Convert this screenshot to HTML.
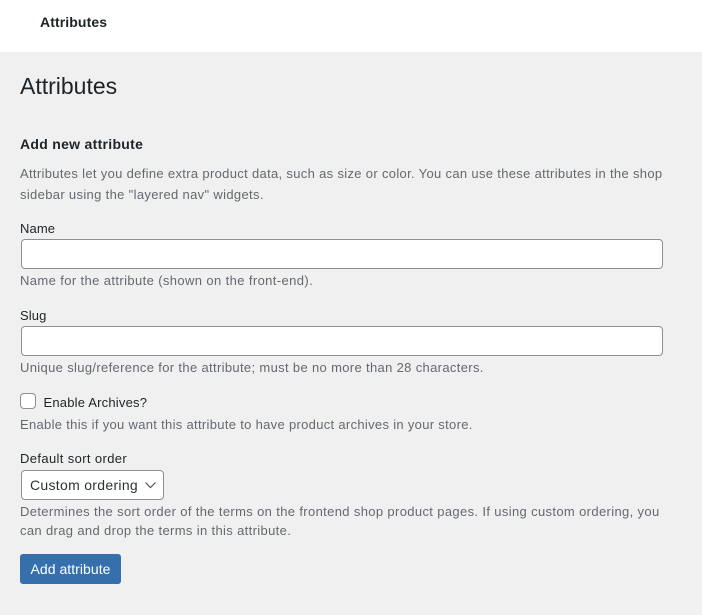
<!DOCTYPE html>
<html>
<head>
<meta charset="utf-8">
<style>
html,body{margin:0;padding:0;width:702px;height:615px;overflow:hidden;background:#f0f0f1;font-family:"Liberation Sans",sans-serif;}
.t{position:absolute;white-space:nowrap;line-height:16px;font-size:13px;color:#646970;left:20px;}
.d{color:#1d2327;}
.box{position:absolute;box-sizing:border-box;background:#fff;border:1px solid #8c8f94;border-radius:4px;}
</style>
</head>
<body>
<div style="position:absolute;left:0;top:0;width:702px;height:52px;background:#fff"></div>
<div class="t d" style="left:40px;top:14px;font-weight:bold;font-size:14px;letter-spacing:.1px">Attributes</div>
<div class="t d" style="top:73px;line-height:26px;font-size:23px;letter-spacing:0">Attributes</div>
<div class="t d" style="top:136px;font-weight:bold;font-size:14px;letter-spacing:.29px">Add new attribute</div>
<div class="t" style="top:166px;letter-spacing:.325px">Attributes let you define extra product data, such as size or color. You can use these attributes in the shop</div>
<div class="t" style="top:187px;letter-spacing:.335px">sidebar using the "layered nav" widgets.</div>
<div class="t d" style="top:221px;letter-spacing:.1px">Name</div>
<div class="box" style="left:21px;top:239px;width:642px;height:30px"></div>
<div class="t" style="top:273px;letter-spacing:.385px">Name for the attribute (shown on the front-end).</div>
<div class="t d" style="top:308px;letter-spacing:.1px">Slug</div>
<div class="box" style="left:21px;top:326px;width:642px;height:30px"></div>
<div class="t" style="top:360px;letter-spacing:.34px">Unique slug/reference for the attribute; must be no more than 28 characters.</div>
<div class="box" style="left:20px;top:393px;width:16px;height:16px"></div>
<div class="t d" style="left:43.5px;top:395px;letter-spacing:.2px">Enable Archives?</div>
<div class="t" style="top:417px;letter-spacing:.31px">Enable this if you want this attribute to have product archives in your store.</div>
<div class="t d" style="top:451px;letter-spacing:.37px">Default sort order</div>
<div class="box" style="left:21px;top:470px;width:143px;height:30px"></div>
<div class="t" style="left:30px;top:477px;font-size:14px;color:#2c3338;letter-spacing:.3px">Custom ordering</div>
<svg style="position:absolute;left:143px;top:478px" width="16" height="14" viewBox="0 0 16 14"><path d="M2.5 4.5 L7.5 9.5 L12.5 4.5" fill="none" stroke="#50575e" stroke-width="1.2"/></svg>
<div class="t" style="top:504px;letter-spacing:.355px">Determines the sort order of the terms on the frontend shop product pages. If using custom ordering, you</div>
<div class="t" style="top:523px;letter-spacing:.35px">can drag and drop the terms in this attribute.</div>
<div style="position:absolute;left:20px;top:554px;width:101px;height:30px;background:#3570ad;border-radius:3px;color:#fff;font-size:14px;line-height:31px;text-align:center;letter-spacing:.05px">Add attribute</div>
</body>
</html>
